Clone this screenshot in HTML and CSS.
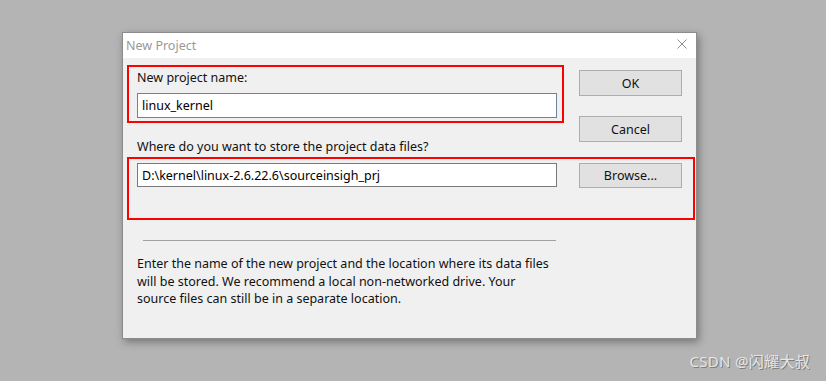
FILE: index.html
```html
<!DOCTYPE html>
<html lang="en">
<head>
<meta charset="UTF-8">
<title>New Project</title>
<link rel="stylesheet" href="styles.css">
</head>
<body>
<div class="dialog">
    <div class="titlebar">
        <span class="title">New Project</span>
        <svg class="close" width="10" height="10" viewBox="0 0 10 10">
            <path d="M0.5 0.5 L9.5 9.5 M9.5 0.5 L0.5 9.5" stroke="#8a8a8a" stroke-width="1" fill="none"/>
        </svg>
    </div>
    <div class="content">
        <div class="top-row">
            <div class="name-box">
                <div class="label">New project name:</div>
                <input type="text" class="field field-focus" value="linux_kernel">
            </div>
            <div class="buttons">
                <button class="btn btn-ok">OK</button>
                <button class="btn btn-cancel">Cancel</button>
            </div>
        </div>
        <div class="label label-where">Where do you want to store the project data files?</div>
        <div class="path-box">
            <input type="text" class="field field-path" value="D:\kernel\linux-2.6.22.6\sourceinsigh_prj">
            <button class="btn btn-browse">Browse...</button>
        </div>
        <div class="separator"></div>
        <p class="note">Enter the name of the new project and the location where its data files<br>will be stored. We recommend a local non-networked drive. Your<br>source files can still be in a separate location.</p>
    </div>
</div>
<div class="watermark">CSDN @闪耀大叔</div>
</body>
</html>
```

FILE: styles.css
```css
body {
    margin: 0;
    background-color: #b4b4b4;
    font-family: "Noto Sans", "Noto Sans CJK SC", sans-serif;
    font-size: 12.5px;
    color: #111;
    height: 381px;
    overflow: hidden;
    position: relative;
}
.dialog {
    margin: 32px 0 0 122px;
    width: 575px;
    height: 307px;
    box-sizing: border-box;
    background-color: #f0f0f0;
    border: 1px solid #8c8c8c;
    box-shadow: 2px 3px 8px rgba(0,0,0,0.35);
}
.titlebar {
    height: 25px;
    background-color: #fff;
    display: flex;
    align-items: center;
    justify-content: space-between;
    padding: 0 9px 0 3px;
}
.title {
    color: #999;
    font-size: 12.5px;
}
.close {
    margin-top: -4px;
}
.content {
    padding-left: 4px;
}
.top-row {
    display: flex;
    align-items: flex-start;
    height: 58px;
    margin-top: 7px;
}
.name-box {
    width: 437px;
    height: 58px;
    box-sizing: border-box;
    border: 2px solid #f00;
    padding-left: 8px;
}
.label {
    line-height: 16px;
    white-space: nowrap;
}
.name-box .label {
    margin-top: 3px;
    margin-bottom: 7px;
}
.field {
    display: block;
    box-sizing: border-box;
    width: 420px;
    margin: 0;
    padding: 0 4px;
    font-family: inherit;
    font-size: 12.5px;
    color: #000;
    background-color: #fff;
    border: 1px solid #7a7a7a;
    outline: none;
}
.field-focus {
    height: 25px;
    border-color: #6f8296;
}
.field-path {
    height: 24px;
}
.buttons {
    display: flex;
    flex-direction: column;
    margin-left: 15px;
}
.btn {
    width: 103px;
    height: 26px;
    padding: 0;
    font-family: inherit;
    font-size: 12.5px;
    color: #111;
    background-color: #e1e1e1;
    border: 1px solid #adadad;
}
.btn-ok {
    margin-top: 5px;
}
.btn-cancel {
    margin-top: 20px;
}
.label-where {
    margin: 16px 0 2px 10px;
}
.path-box {
    display: flex;
    align-items: flex-start;
    width: 568px;
    height: 63px;
    box-sizing: border-box;
    border: 2px solid #f00;
    padding: 4px 0 0 8px;
}
.btn-browse {
    height: 25px;
    margin-left: 22px;
}
.separator {
    width: 413px;
    margin: 20px 0 0 16px;
    border-top: 1px solid #a0a0a0;
}
.note {
    margin: 14px 0 0 10px;
    line-height: 17.5px;
    white-space: nowrap;
}
.watermark {
    position: absolute;
    right: 16px;
    bottom: 10px;
    font-size: 15px;
    color: #e6e6e6;
    text-shadow: 1px 1px 0 #7d7d7d;
    letter-spacing: 0.3px;
}
```
